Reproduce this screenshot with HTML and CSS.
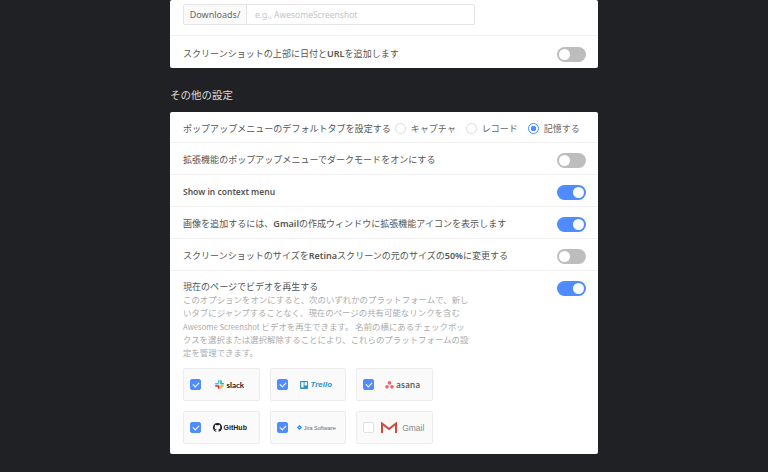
FILE: index.html
```html
<!DOCTYPE html>
<html lang="ja">
<head>
<meta charset="utf-8">
<title>設定</title>
<link rel="stylesheet" href="styles.css">
</head>
<body>
<main class="page">
  <section class="card">
    <div class="row row-input">
      <div class="input-group">
        <span class="addon">Downloads/</span>
        <span class="placeholder">e.g., AwesomeScreenshot</span>
      </div>
    </div>
    <div class="row">
      <span class="label">スクリーンショットの上部に日付と<b>URL</b>を追加します</span>
      <span class="switch"></span>
    </div>
  </section>

  <h2 class="heading">その他の設定</h2>

  <section class="card">
    <div class="row row-tab">
      <span class="label">ポップアップメニューのデフォルトタブを設定する</span>
      <div class="radios">
        <span class="radio"></span><span class="radio-text">キャプチャ</span>
        <span class="radio second"></span><span class="radio-text">レコード</span>
        <span class="radio checked third"></span><span class="radio-text">記憶する</span>
      </div>
    </div>
    <div class="row">
      <span class="label">拡張機能のポップアップメニューでダークモードをオンにする</span>
      <span class="switch"></span>
    </div>
    <div class="row">
      <span class="label latin">Show in context menu</span>
      <span class="switch on"></span>
    </div>
    <div class="row">
      <span class="label">画像を追加するには、<b>Gmail</b>の作成ウィンドウに拡張機能アイコンを表示します</span>
      <span class="switch on"></span>
    </div>
    <div class="row">
      <span class="label">スクリーンショットのサイズを<b>Retina</b>スクリーンの元のサイズの<b>50%</b>に変更する</span>
      <span class="switch"></span>
    </div>
    <div class="row-video">
      <div class="video-head">
        <div class="video-text">
          <div class="label">現在のページでビデオを再生する</div>
          <p class="desc">このオプションをオンにすると、次のいずれかのプラットフォームで、新しいタブにジャンプすることなく、現在のページの共有可能なリンクを含む <span class="desc-latin">Awesome Screenshot</span> ビデオを再生できます。 名前の横にあるチェックボックスを選択または選択解除することにより、これらのプラットフォームの設定を管理できます。</p>
        </div>
        <span class="switch on"></span>
      </div>
      <div class="platforms">
        <div class="platform">
          <span class="check on"></span>
          <div class="logo">
            <svg class="ico" viewBox="0 0 12 12" width="9" height="9"><rect x="4" y="0" width="2" height="5" rx="1" fill="#36c5f0"/><rect x="0" y="4" width="5" height="2" rx="1" fill="#36c5f0"/><rect x="7" y="0" width="2" height="5" rx="1" fill="#2eb67d"/><rect x="7" y="4" width="5" height="2" rx="1" fill="#2eb67d"/><rect x="0" y="7" width="5" height="2" rx="1" fill="#e01e5a"/><rect x="4" y="7" width="2" height="5" rx="1" fill="#e01e5a"/><rect x="7" y="7" width="5" height="2" rx="1" fill="#ecb22e"/><rect x="7" y="7" width="2" height="5" rx="1" fill="#ecb22e"/></svg>
            <span class="t-slack">slack</span>
          </div>
        </div>
        <div class="platform">
          <span class="check on"></span>
          <div class="logo">
            <svg class="ico" viewBox="0 0 10 10" width="8" height="8"><rect width="10" height="10" rx="1.2" fill="#2f8fc7"/><rect x="1.5" y="1.5" width="3" height="6.5" fill="#fff"/><rect x="5.7" y="1.5" width="3" height="4" fill="#fff"/></svg>
            <span class="t-trello">Trello</span>
          </div>
        </div>
        <div class="platform">
          <span class="check on"></span>
          <div class="logo">
            <svg class="ico" viewBox="0 0 12 11" width="9" height="8"><circle cx="6" cy="2.6" r="2.5" fill="#f0616d"/><circle cx="2.6" cy="8" r="2.5" fill="#f0616d"/><circle cx="9.4" cy="8" r="2.5" fill="#f0616d"/></svg>
            <span class="t-asana">asana</span>
          </div>
        </div>
        <div class="platform">
          <span class="check on"></span>
          <div class="logo">
            <svg class="ico" viewBox="0 0 16 16" width="9" height="9"><path fill="#1b1f23" d="M8 0a8 8 0 0 0-2.5 15.6c.4.1.5-.2.5-.4v-1.4c-2.2.5-2.7-1-2.7-1-.4-.9-.9-1.200-.9-1.200-.7-.5.100-.5.100-.5.800.100 1.200.800 1.200.800.700 1.200 1.900.900 2.300.700.100-.500.300-.900.500-1.100-1.800-.200-3.600-.900-3.600-4 0-.900.300-1.600.800-2.100-.100-.200-.400-1 .100-2.100 0 0 .700-.200 2.200.800a7.600 7.600 0 0 1 4 0c1.500-1 2.200-.800 2.200-.800.500 1.100.200 1.900.100 2.100.500.500.800 1.200.800 2.100 0 3.100-1.900 3.800-3.600 4 .300.200.500.700.500 1.500v2.200c0 .200.100.500.600.400A8 8 0 0 0 8 0z"/></svg>
            <span class="t-github">GitHub</span>
          </div>
        </div>
        <div class="platform">
          <span class="check on"></span>
          <div class="logo">
            <svg class="ico" viewBox="0 0 10 10" width="5" height="5"><path d="M5 0l5 5-5 5-5-5z" fill="#2684ff"/><path d="M5 3.300L6.700 5 5 6.700 3.300 5z" fill="#fff"/></svg>
            <span class="t-jira">Jira Software</span>
          </div>
        </div>
        <div class="platform">
          <span class="check"></span>
          <div class="logo logo-gmail">
            <svg class="ico" viewBox="0 0 16 12" width="16" height="12"><path d="M1 11V1.500L8 7l7-5.500V11" fill="none" stroke="#d0493c" stroke-width="2"/></svg>
            <span class="t-gmail">Gmail</span>
          </div>
        </div>
      </div>
    </div>
  </section>
</main>
</body>
</html>
```
FILE: styles.css
```css
* { box-sizing: border-box; }
html, body { margin: 0; height: 100%; }
body {
  background: #202124;
  overflow: hidden;
  font-family: "Noto Sans CJK JP", "Noto Sans", sans-serif;
  color: #5a5a5a;
  font-size: 9px;
}
.page { width: 428px; margin-left: 170px; }
.card { background: #fff; border-radius: 2px; }
.row {
  height: 32px;
  padding: 2px 12px 0 13px;
  display: flex;
  align-items: center;
  justify-content: space-between;
  border-bottom: 1px solid #f0f0f0;
}
.card > .row:last-child { border-bottom: 0; }
.row-input { height: 36px; padding-top: 4px; align-items: flex-start; }
.label { color: #555; font-size: 9.04px; line-height: 13px; white-space: nowrap; }
.label b { font-family: "Noto Sans", sans-serif; font-weight: 600; }
.label.latin { font-family: "Noto Sans", sans-serif; font-weight: 600; font-size: 8.5px; }
.input-group {
  width: 292px;
  height: 21px;
  display: flex;
  border: 1px solid #e4e4e4;
  border-radius: 2px;
}
.addon {
  width: 63px;
  background: #fafafa;
  border-right: 1px solid #e4e4e4;
  font: 9px/19px "Noto Sans", sans-serif;
  color: #666;
  text-align: center;
}
.placeholder { padding-left: 8px; font: 8.5px/19px "Noto Sans", sans-serif; color: #c4c4c4; }
.heading {
  margin: 0;
  height: 44px;
  padding-top: 19px;
  color: #ddd;
  font-size: 10.5px;
  line-height: 16px;
  font-weight: 400;
}
.switch {
  flex: none;
  position: relative;
  width: 29px;
  height: 15px;
  margin-top: 2px;
  border-radius: 8px;
  background: #bdbdbd;
}
.switch::after {
  content: "";
  position: absolute;
  top: 2px;
  left: 2px;
  width: 11px;
  height: 11px;
  border-radius: 50%;
  background: #fff;
}
.switch.on { background: #4f8cff; }
.switch.on::after { left: 16px; }
.video-head .switch { margin-top: 1px; }
.radios { display: flex; align-items: center; margin-left: 1px; }
.radio {
  width: 11px;
  height: 11px;
  border: 1px solid #ddd;
  border-radius: 50%;
  background: #fff;
  margin-left: 3px;
}
.radio.second { margin-left: 10px; }
.radio.third { margin-left: 10px; }
.radio.checked {
  border-color: #4f8cff;
  background: radial-gradient(circle, #4f8cff 0 2.5px, #fff 3px);
}
.radio-text { margin-left: 5px; color: #666; font-size: 9px; line-height: 13px; }
.row-tab { height: 31px; justify-content: flex-start; }
.row-video { padding: 9px 12px 0 13px; height: 183px; }
.video-head { display: flex; justify-content: space-between; align-items: flex-start; }
.video-text { width: 290px; }
.desc { margin: 0; color: #ababab; font-size: 8.44px; line-height: 13.3px; }
.desc-latin { font-size: 7.7px; }
.platforms {
  margin-top: 9px;
  display: grid;
  grid-template-columns: repeat(3, 76.5px);
  grid-auto-rows: 33px;
  gap: 10px 10px;
}
.platform {
  display: flex;
  align-items: center;
  padding-left: 6px;
  background: #fafafa;
  border: 1px solid #ececec;
  border-radius: 2px;
}
.check {
  flex: none;
  width: 11px;
  height: 11px;
  border: 1px solid #e0e0e0;
  border-radius: 2px;
  background: #fff;
  position: relative;
}
.check.on { background: #4f8cff; border-color: #4f8cff; }
.check.on::after {
  content: "";
  position: absolute;
  left: 2px;
  top: 2px;
  width: 5px;
  height: 3px;
  border-left: 1px solid #fff;
  border-bottom: 1px solid #fff;
  transform: rotate(-45deg);
}
.logo {
  flex: 1;
  display: flex;
  align-items: center;
  justify-content: center;
  gap: 2px;
  font-family: "Liberation Sans", sans-serif;
}
.logo-gmail { gap: 5px; }
.ico { flex: none; }
.t-slack { font: 700 8px/12px Lato, sans-serif; color: #222; }
.t-trello { font: italic 700 8px/12px "Liberation Sans", sans-serif; color: #2f8fc7; }
.t-asana { font: 500 9px/12px Lato, sans-serif; color: #444; letter-spacing: .3px; }
.t-github { font: 700 7px/12px "Liberation Sans", sans-serif; color: #222; }
.t-jira { font: 400 5.5px/12px "Liberation Sans", sans-serif; color: #5b6a84; }
.t-gmail { font: 400 8.5px/12px "Liberation Sans", sans-serif; color: #888; }
```
